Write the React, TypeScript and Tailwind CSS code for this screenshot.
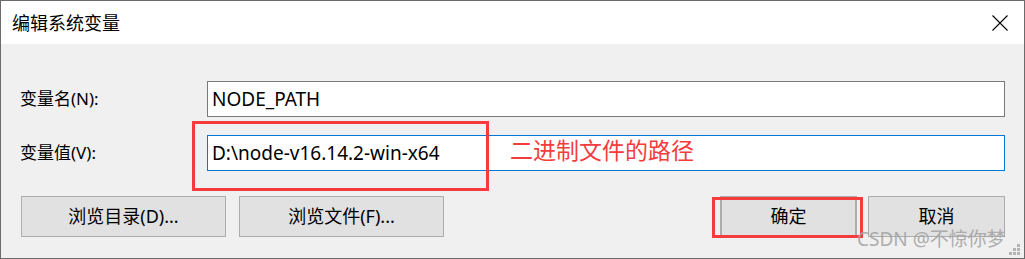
import React from 'react';

const font = "font-['Noto_Sans','Noto_Sans_CJK_SC',sans-serif]";

const CloseIcon = () => (
  <svg width="16" height="16" viewBox="0 0 16 16" className="block">
    <path d="M0.5 0.5 L15.5 15.5 M15.5 0.5 L0.5 15.5" stroke="#000" strokeWidth="1.1" fill="none" />
  </svg>
);

const Grip = () => (
  <svg width="12" height="12" viewBox="0 0 12 12" className="block">
    {[
      [8, 0],
      [4, 4],
      [8, 4],
      [0, 8],
      [4, 8],
      [8, 8],
    ].map(([x, y]) => (
      <rect key={`${x}-${y}`} x={x} y={y} width="3" height="3" fill="#b4b4b4" />
    ))}
  </svg>
);

const Button: React.FC<{ label: string; className?: string }> = ({ label, className }) => (
  <div
    className={`h-[41px] flex items-center justify-center bg-[#e1e1e1] border border-[#adadad] text-[18px] text-black ${className ?? ''}`}
  >
    {label}
  </div>
);

export default function App() {
  return (
    <div className={`relative w-[1025px] h-[259px] border border-[#6b6b6b] bg-[#f0f0f0] overflow-hidden ${font}`}>
      {/* title bar */}
      <div className="h-[43px] bg-white flex items-center justify-between pl-[11px] pr-[16px]">
        <span className="text-[18px] text-black leading-none">编辑系统变量</span>
        <CloseIcon />
      </div>

      <div className="pl-[19px] pr-[19px] pt-[37px]">
        {/* name row */}
        <div className="flex items-center h-[36px]">
          <div className="w-[187px] text-[17px] text-black">变量名(N):</div>
          <div className="flex-1 h-full bg-white border border-[#7a7a7a] flex items-center pl-[4px] text-[19px] text-black">
            NODE_PATH
          </div>
        </div>

        {/* value row */}
        <div className="relative flex items-center h-[36px] mt-[18px]">
          <div className="w-[187px] text-[17px] text-black">变量值(V):</div>
          <div className="flex-1 h-full bg-white border border-[#0078d7] flex items-center pl-[4px] text-[19px] text-black">
            D:\node-v16.14.2-win-x64
          </div>
          {/* annotation */}
          <div className="absolute left-[172px] top-[-14px] w-[297px] h-[70px] border-[3px] border-[#f53c3c]" />
          <span className="absolute left-[490px] top-[4px] text-[23px] leading-none text-[#f53c3c]">二进制文件的路径</span>
        </div>

        {/* buttons */}
        <div className="flex items-center mt-[25px] pl-[1px]">
          <div className="flex gap-[13px]">
            <Button label="浏览目录(D)..." className="w-[205px]" />
            <Button label="浏览文件(F)..." className="w-[205px]" />
          </div>
          <div className="ml-auto flex gap-[11px]">
            <div className="relative">
              <Button label="确定" className="w-[137px] border-[2px] border-[#0078d7]" />
              <div className="absolute left-[-8px] top-[1px] w-[151px] h-[41px] border-[3px] border-[#f53c3c]" />
            </div>
            <Button label="取消" className="w-[137px]" />
          </div>
        </div>
      </div>

      {/* watermark */}
      <span className="absolute left-[856px] top-[229px] text-[19px] leading-none text-[#a6a6a6] opacity-90">CSDN @不惊你梦</span>
      <div className="absolute right-[3px] bottom-[2px]">
        <Grip />
      </div>
    </div>
  );
}
